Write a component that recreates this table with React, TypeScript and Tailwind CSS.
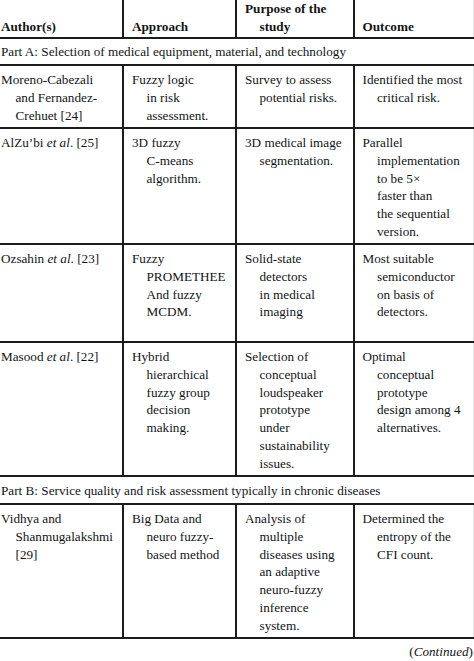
import React from "react";

type Row = { h: string; cells: React.ReactNode[][] };

const L = ({ lines }: { lines: React.ReactNode[] }) => (
  <div className="pl-[14.5px] indent-[-14.5px] whitespace-nowrap">
    {lines.map((l, i) => (
      <React.Fragment key={i}>
        {l}
        {i < lines.length - 1 && <br />}
      </React.Fragment>
    ))}
  </div>
);

const grid = "grid grid-cols-[124px_112.5px_118px_119.5px]";
const cellBase = ["pl-[1px] border-r-2 border-[#1c1c1c]", "pl-[8px] border-r-2 border-[#1c1c1c]", "pl-[8.5px] border-r-2 border-[#1c1c1c]", "pl-[8px] border-r border-[#e4e4e4]"];

const rows: Row[] = [
  {
    h: "h-[63px]",
    cells: [
      ["Moreno-Cabezali", "and Fernandez-", "Crehuet [24]"],
      ["Fuzzy logic", "in risk", "assessment."],
      ["Survey to assess", "potential risks."],
      ["Identified the most", "critical risk."],
    ],
  },
  {
    h: "h-[116px]",
    cells: [
      [<>AlZu’bi <i>et al</i>. [25]</>],
      ["3D fuzzy", "C-means", "algorithm."],
      ["3D medical image", "segmentation."],
      ["Parallel", "implementation", "to be 5×", "faster than", "the sequential", "version."],
    ],
  },
  {
    h: "h-[98px]",
    cells: [
      [<>Ozsahin <i>et al</i>. [23]</>],
      ["Fuzzy", "PROMETHEE", "And fuzzy", "MCDM."],
      ["Solid-state", "detectors", "in medical", "imaging"],
      ["Most suitable", "semiconductor", "on basis of", "detectors."],
    ],
  },
  {
    h: "h-[134px]",
    cells: [
      [<>Masood <i>et al</i>. [22]</>],
      ["Hybrid", "hierarchical", "fuzzy group", "decision", "making."],
      ["Selection of", "conceptual", "loudspeaker", "prototype", "under", "sustainability", "issues."],
      ["Optimal", "conceptual", "prototype", "design among 4", "alternatives."],
    ],
  },
];

const rowsB: Row[] = [
  {
    h: "h-[134px]",
    cells: [
      ["Vidhya and", "Shanmugalakshmi", "[29]"],
      ["Big Data and", "neuro fuzzy-", "based method"],
      ["Analysis of", "multiple", "diseases using", "an adaptive", "neuro-fuzzy", "inference", "system."],
      ["Determined the", "entropy of the", "CFI count."],
    ],
  },
];

const DataRow = ({ r }: { r: Row }) => (
  <div className={`${grid} ${r.h} border-b-2 border-[#1c1c1c]`}>
    {r.cells.map((c, i) => (
      <div key={i} className={`${cellBase[i]} pt-[5px]`}>
        <L lines={c} />
      </div>
    ))}
  </div>
);

export default function App() {
  return (
    <div className="w-[474px] h-[661px] bg-white overflow-hidden text-[#141414] font-['Liberation_Serif',serif] text-[13.2px] leading-[17.8px]">
      <div className={`${grid} h-[39px] border-b-2 border-[#1c1c1c] font-bold`}>
        <div className={`${cellBase[0]} flex items-end pb-[1px]`}>Author(s)</div>
        <div className={`${cellBase[1]} flex items-end pb-[1px]`}>Approach</div>
        <div className={`${cellBase[2]} flex items-end pb-[1px]`}>
          <L lines={["Purpose of the", "study"]} />
        </div>
        <div className={`${cellBase[3]} flex items-end pb-[1px]`}>Outcome</div>
      </div>
      <div className="h-[27px] border-b-2 border-[#1c1c1c] w-[474px] flex items-center pl-[1px] whitespace-nowrap">
        Part A: Selection of medical equipment, material, and technology
      </div>
      {rows.map((r, i) => (
        <DataRow key={i} r={r} />
      ))}
      <div className="h-[28px] border-b-2 border-[#1c1c1c] w-[474px] flex items-center pl-[1px] pt-[1px] whitespace-nowrap">
        Part B: Service quality and risk assessment typically in chronic diseases
      </div>
      {rowsB.map((r, i) => (
        <DataRow key={i} r={r} />
      ))}
      <div className="flex justify-end pr-[1px] pt-[4px] whitespace-nowrap">
        <span>
          (<i>Continued</i>)
        </span>
      </div>
    </div>
  );
}
